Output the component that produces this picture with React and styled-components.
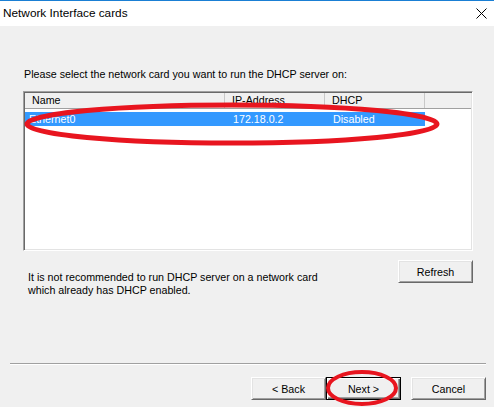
import React from "react";
import styled, { createGlobalStyle } from "styled-components";

const GlobalStyle = createGlobalStyle`
  html, body { margin: 0; padding: 0; background: #f0f0f0; }
  body { font-family: "Liberation Sans", Arial, sans-serif; }
  * { box-sizing: border-box; }
`;

const Window = styled.div`
  position: relative;
  width: 494px;
  height: 407px;
  overflow: hidden;
  display: flex;
  flex-direction: column;
  background: #f0f0f0;
  font-family: "Liberation Sans", Arial, sans-serif;
  font-size: 10.7px;
  color: #000;
`;

const TitleBar = styled.div`
  height: 26px;
  flex: none;
  border-top: 1px solid #1a7fd4;
  background: #fff;
  display: flex;
  align-items: center;
  justify-content: space-between;
  padding: 0 7px 0 3px;
  font-size: 11.8px;
`;

const TitleText = styled.span`
  line-height: 16px;
  margin-top: -1px;
`;

const Body = styled.div`
  flex: 1;
  display: flex;
  flex-direction: column;
  padding: 42px 21px 0 23px;
`;

const Label = styled.div`
  line-height: 13px;
  padding-left: 1px;
  white-space: nowrap;
`;

const ListBox = styled.div`
  margin-top: 10px;
  height: 160px;
  background: #fff;
  border: 1px solid;
  border-color: #a0a0a0 #ffffff #ffffff #a0a0a0;
  box-shadow: inset 1px 1px #696969, inset -1px -1px #e3e3e3;
  padding: 1px;
  display: flex;
  flex-direction: column;
`;

const HeaderRow = styled.div`
  display: flex;
  height: 16px;
  background: #f0f0f0;
  border-bottom: 1px solid #a0a0a0;
`;

const HeaderCell = styled.div`
  width: ${(p) => p.$w}px;
  flex: none;
  border-right: 1px solid #c8c8c8;
  padding-left: 7px;
  line-height: 15px;
  white-space: nowrap;
`;

const Rows = styled.div`
  padding-top: 3px;
`;

const Row = styled.div`
  display: flex;
  width: 400px;
  height: 14px;
  background: ${(p) => (p.$selected ? "#3399ff" : "transparent")};
  color: ${(p) => (p.$selected ? "#fff" : "#000")};
`;

const Cell = styled.div`
  width: ${(p) => p.$w}px;
  flex: none;
  padding-left: ${(p) => p.$pad}px;
  line-height: 14px;
  white-space: nowrap;
`;

const InfoRow = styled.div`
  margin-top: 9px;
  display: flex;
  justify-content: space-between;
  align-items: flex-start;
`;

const Note = styled.div`
  margin-top: 11px;
  padding-left: 5px;
  line-height: 13px;
`;

const Button = styled.button`
  width: 75px;
  height: 23px;
  padding: 0;
  margin: 0;
  font-family: "Liberation Sans", Arial, sans-serif;
  font-size: 10.7px;
  color: #000;
  background: #f0f0f0;
  border: 1px solid;
  border-color: ${(p) => (p.$default ? "#000 #000 #000 #000" : "#ffffff #696969 #696969 #ffffff")};
  box-shadow: ${(p) =>
    p.$default
      ? "inset 1px 1px #fff, inset -1px -1px #696969, inset -2px -2px #a0a0a0"
      : "inset 1px 1px #e3e3e3, inset -1px -1px #a0a0a0"};
  outline: none;
  cursor: default;
`;

const Footer = styled.div`
  flex: none;
  display: flex;
  flex-direction: column;
  padding: 0 8px 7px 10px;
`;

const Separator = styled.div`
  height: 2px;
  border-top: 1px solid #a0a0a0;
  border-bottom: 1px solid #ffffff;
`;

const ButtonBar = styled.div`
  margin-top: 12px;
  display: flex;
  justify-content: flex-end;
`;

const WizardNav = styled.div`
  display: flex;
  margin-right: 10px;
`;

const Overlay = styled.svg`
  position: absolute;
  left: 0;
  top: 0;
  pointer-events: none;
`;

const CloseIcon = () => (
  <svg width="11" height="11" viewBox="0 0 11 11">
    <path d="M0.5 0.5 L10.5 10.5 M10.5 0.5 L0.5 10.5" stroke="#000" strokeWidth="1" fill="none" />
  </svg>
);

export default function App() {
  return (
    <Window>
      <GlobalStyle />
      <TitleBar>
        <TitleText>Network Interface cards</TitleText>
        <CloseIcon />
      </TitleBar>
      <Body>
        <Label>Please select the network card you want to run the DHCP server on:</Label>
        <ListBox>
          <HeaderRow>
            <HeaderCell $w={200}>Name</HeaderCell>
            <HeaderCell $w={100}>IP-Address</HeaderCell>
            <HeaderCell $w={100}>DHCP</HeaderCell>
          </HeaderRow>
          <Rows>
            <Row $selected>
              <Cell $w={200} $pad={4}>Ethernet0</Cell>
              <Cell $w={100} $pad={8}>172.18.0.2</Cell>
              <Cell $w={100} $pad={8}>Disabled</Cell>
            </Row>
          </Rows>
        </ListBox>
        <InfoRow>
          <Note>
            It is not recommended to run DHCP server on a network card
            <br />
            which already has DHCP enabled.
          </Note>
          <Button>Refresh</Button>
        </InfoRow>
      </Body>
      <Footer>
        <Separator />
        <ButtonBar>
          <WizardNav>
            <Button>&lt; Back</Button>
            <Button $default>Next &gt;</Button>
          </WizardNav>
          <Button>Cancel</Button>
        </ButtonBar>
      </Footer>
      <Overlay width="494" height="407" viewBox="0 0 494 407">
        <ellipse cx="232" cy="124" rx="205" ry="19" fill="none" stroke="#e8151f" strokeWidth="5" />
        <ellipse cx="362" cy="388" rx="34" ry="16" fill="none" stroke="#e8151f" strokeWidth="4" />
      </Overlay>
    </Window>
  );
}
